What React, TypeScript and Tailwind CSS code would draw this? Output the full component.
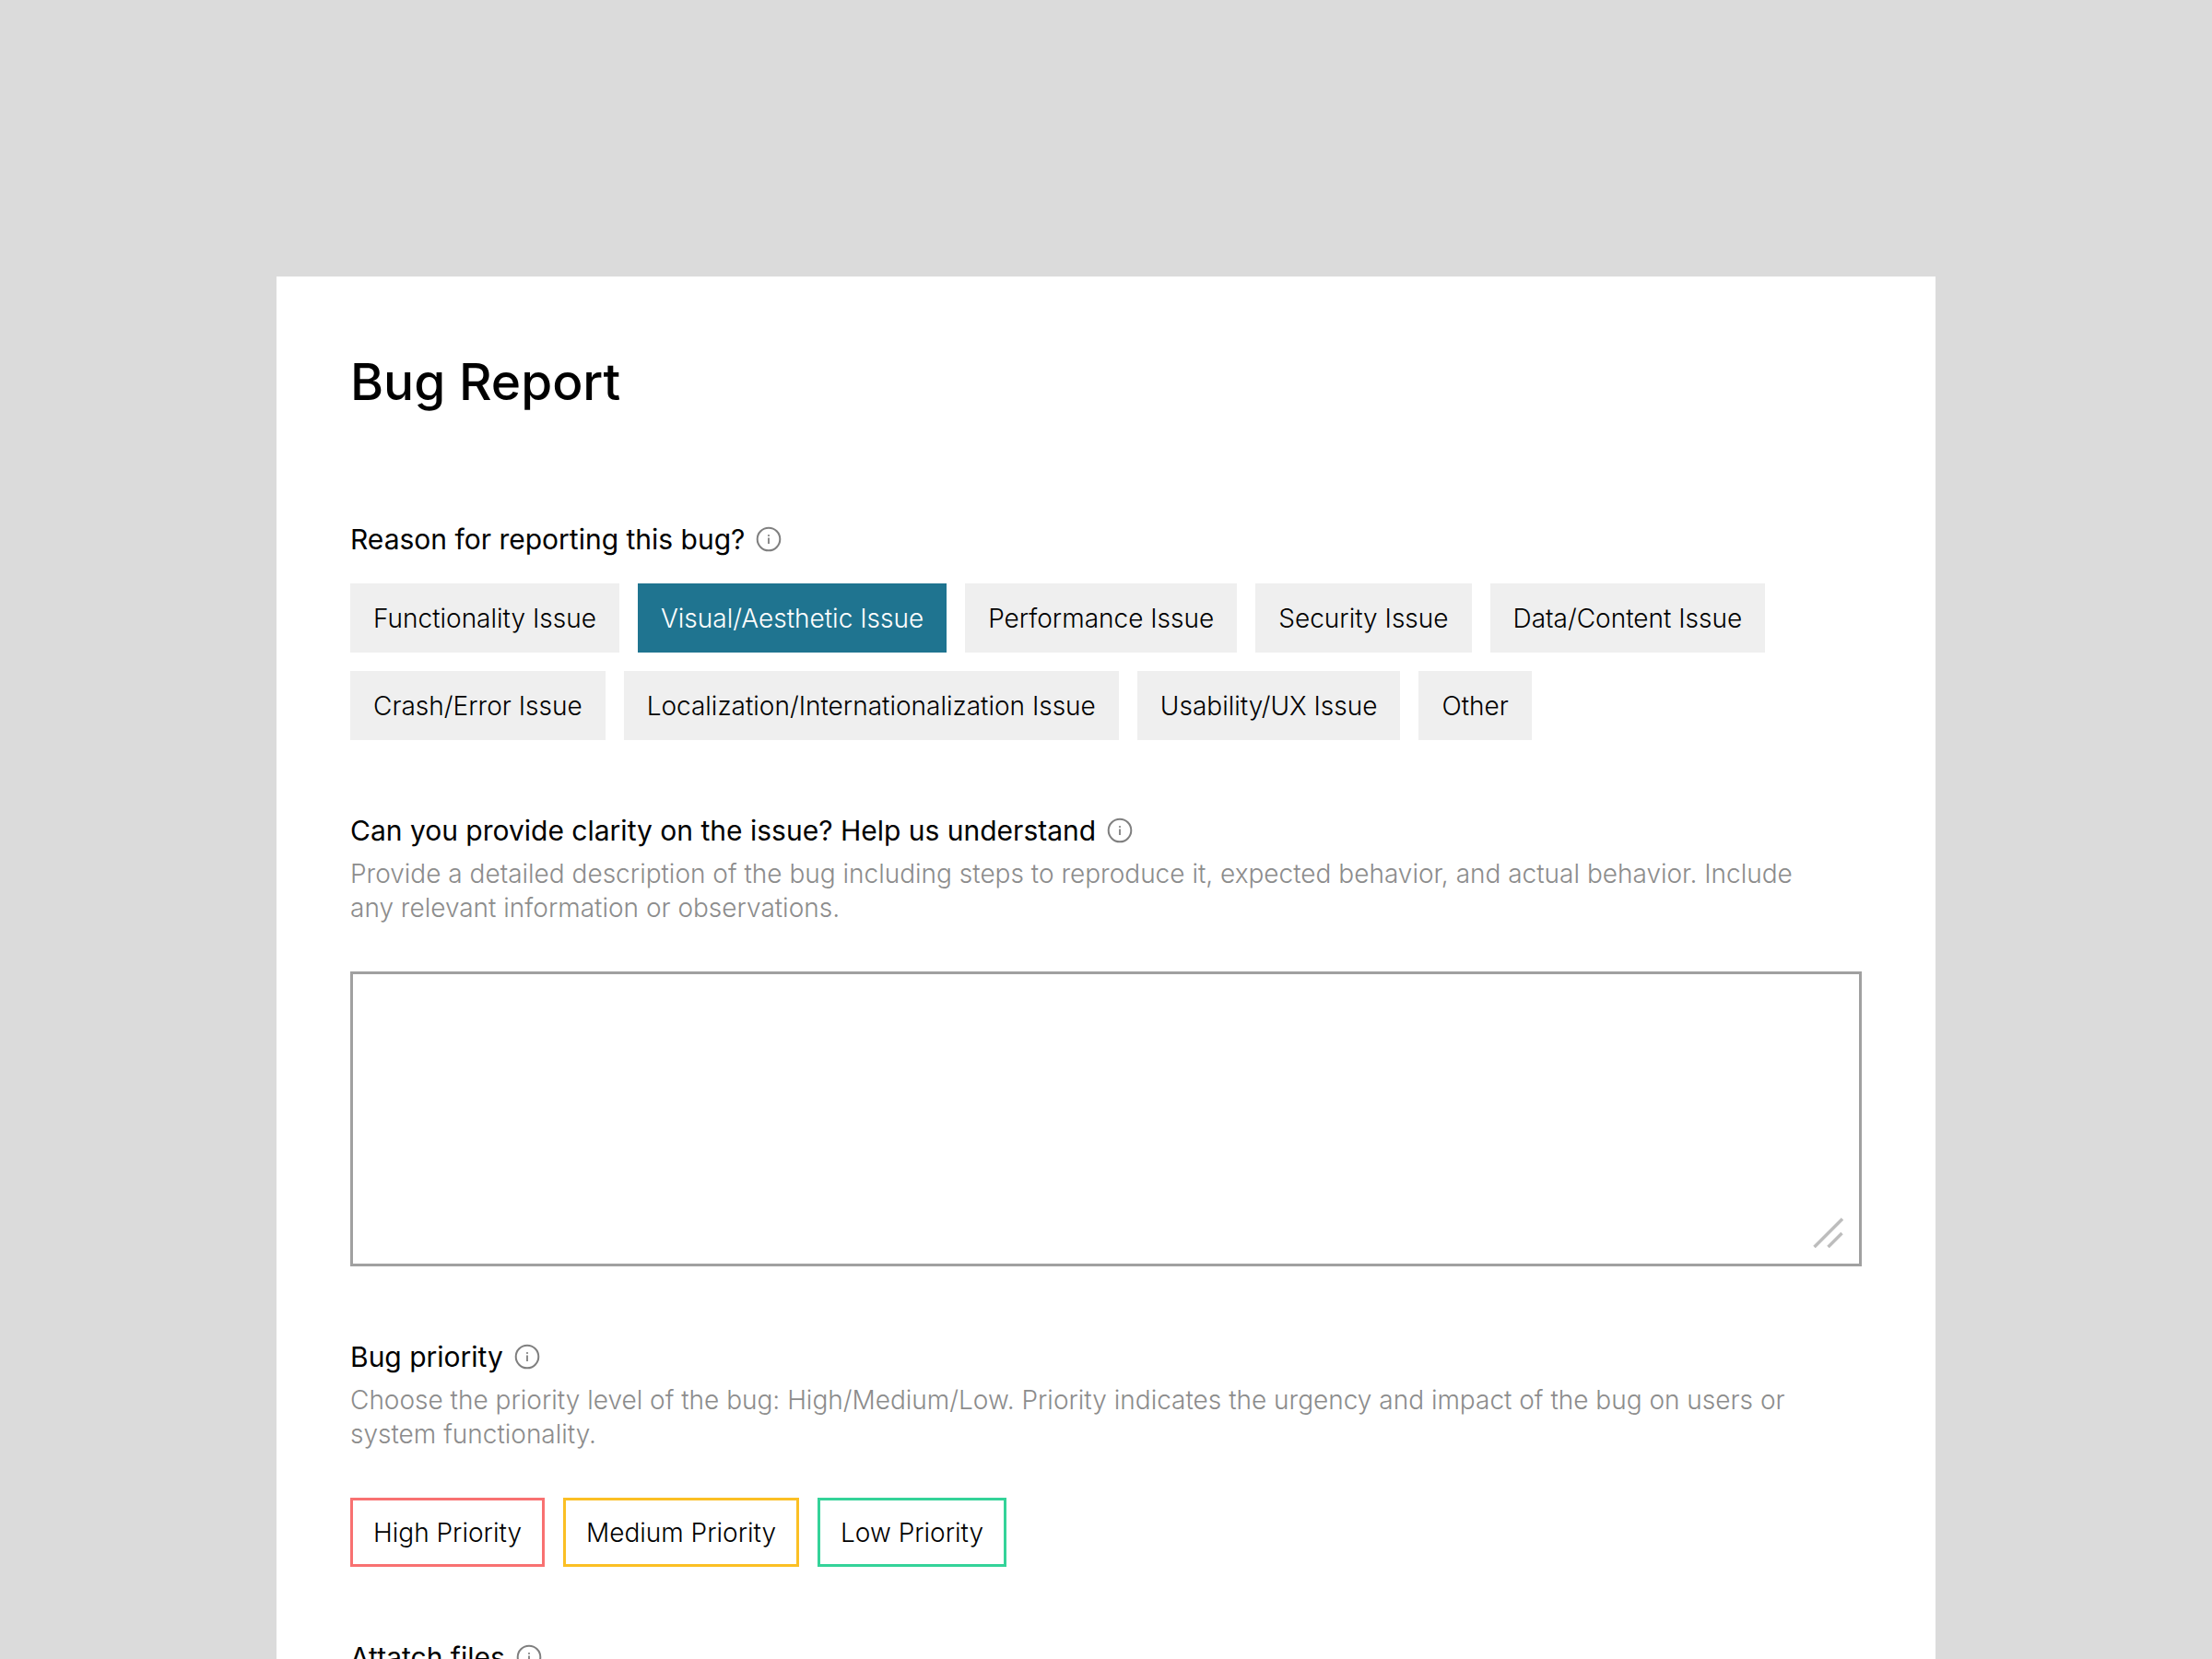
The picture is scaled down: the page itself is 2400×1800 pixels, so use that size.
import React, { useState } from "react";

const reasons = [
  "Functionality Issue",
  "Visual/Aesthetic Issue",
  "Performance Issue",
  "Security Issue",
  "Data/Content Issue",
  "Crash/Error Issue",
  "Localization/Internationalization Issue",
  "Usability/UX Issue",
  "Other",
];

const priorities = [
  { name: "High Priority", border: "border-[#f87171]" },
  { name: "Medium Priority", border: "border-[#fbbf24]" },
  { name: "Low Priority", border: "border-[#34d399]" },
];

const InfoButton = ({ label }: { label: string }) => (
  <button type="button" aria-label={label} className="text-[#7f7f7f]">
    <svg width="30" height="30" viewBox="0 0 30 30" fill="none">
      <circle cx="15" cy="15" r="12.3" stroke="currentColor" strokeWidth="2" />
      <path d="M15 13.5V20" stroke="currentColor" strokeWidth="1.8" />
      <circle cx="15" cy="11" r="1.1" fill="currentColor" />
    </svg>
  </button>
);

const Heading = ({ id, children }: { id: string; children: string }) => (
  <div className="flex items-center gap-[11px]">
    <h2 id={id} className="text-[30px] leading-9">
      {children}
    </h2>
    <InfoButton label={`About: ${children}`} />
  </div>
);

const Hint = ({ id, children }: { id: string; children: string }) => (
  <p id={id} className="mt-[11px] pr-10 text-[28px] leading-[37px] font-light text-[#8c8c8c]">
    {children}
  </p>
);

const App = () => {
  const [reason, setReason] = useState("Visual/Aesthetic Issue");
  const [priority, setPriority] = useState("");

  return (
    <div className="h-screen overflow-hidden bg-[#dbdbdb] px-10 pt-[300px] font-['Inter',sans-serif] text-black">
      <form className="mx-auto flex min-h-full w-full max-w-[1800px] flex-col gap-20 bg-white p-20">
        <h1 className="mb-[38px] text-[55px] leading-[69px] font-medium">Bug Report</h1>

        <section>
          <Heading id="reason">Reason for reporting this bug?</Heading>
          <div role="group" aria-labelledby="reason" className="mt-[30px] flex flex-wrap gap-5">
            {reasons.map((item) => (
              <button
                key={item}
                type="button"
                aria-pressed={item === reason}
                onClick={() => setReason(item)}
                className={`h-[75px] px-[25px] text-[28px] font-light ${
                  item === reason ? "bg-[#1f7490] text-white" : "bg-[#efefef]"
                }`}
              >
                {item}
              </button>
            ))}
          </div>
        </section>

        <section>
          <Heading id="clarity">Can you provide clarity on the issue? Help us understand</Heading>
          <Hint id="clarity-hint">
            Provide a detailed description of the bug including steps to reproduce it, expected behavior, and actual behavior. Include any relevant information or observations.
          </Hint>
          <div className="relative mt-[50px]">
            <textarea
              aria-labelledby="clarity"
              aria-describedby="clarity-hint"
              className="block h-80 w-full resize-none border-3 border-[#a0a0a0] p-5 text-[28px] font-light"
            />
            {/* Resize grip */}
            <svg
              className="pointer-events-none absolute right-5 bottom-5"
              width="34"
              height="34"
              viewBox="0 0 34 34"
              fill="none"
              stroke="#bdbdbd"
              strokeWidth="3.5"
            >
              <path d="M2.5 33L33 2.5M17.5 33L32.5 18" />
            </svg>
          </div>
        </section>

        <section>
          <Heading id="priority">Bug priority</Heading>
          <Hint id="priority-hint">
            Choose the priority level of the bug: High/Medium/Low. Priority indicates the urgency and impact of the bug on users or system functionality.
          </Hint>
          <div
            role="group"
            aria-labelledby="priority"
            aria-describedby="priority-hint"
            className="mt-[50px] flex flex-wrap gap-5"
          >
            {priorities.map((item) => (
              <button
                key={item.name}
                type="button"
                aria-pressed={item.name === priority}
                onClick={() => setPriority(item.name)}
                className={`h-[75px] border-3 px-[22px] text-[28px] font-light ${item.border}`}
              >
                {item.name}
              </button>
            ))}
          </div>
        </section>

        <section>
          <Heading id="files">Attatch files</Heading>
        </section>
      </form>
    </div>
  );
};

export default App;
